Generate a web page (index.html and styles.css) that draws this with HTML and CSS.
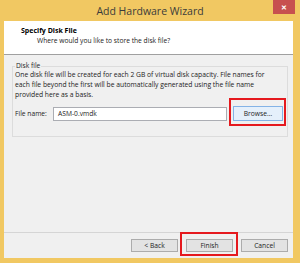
FILE: index.html
```html
<!DOCTYPE html>
<html>
<head>
<meta charset="utf-8">
<link rel="stylesheet" href="styles.css">
</head>
<body>
<div class="window">
  <div class="titlebar">
    <span class="title">Add Hardware Wizard</span>
    <span class="close">&#x2715;</span>
  </div>
  <div class="client">
    <div class="header">
      <div class="h-title">Specify Disk File</div>
      <div class="h-sub">Where would you like to store the disk file?</div>
    </div>
    <fieldset class="group">
      <legend>Disk file</legend>
      <p class="desc">One disk file will be created for each 2 GB of virtual disk capacity. File names for<br>each file beyond the first will be automatically generated using the file name<br>provided here as a basis.</p>
      <div class="file-row">
        <label class="file-label">File name:</label>
        <div class="file-input">ASM-0.vmdk</div>
        <button class="btn btn-focus mark-browse">Browse...</button>
      </div>
    </fieldset>
    <div class="spacer"></div>
    <div class="footer">
      <button class="btn">&lt; Back</button>
      <button class="btn mark-finish">Finish</button>
      <button class="btn">Cancel</button>
    </div>
  </div>
</div>
</body>
</html>
```
FILE: styles.css
```css
html, body {
  margin: 0;
  padding: 0;
}
body {
  width: 300px;
  height: 263px;
  overflow: hidden;
  font-family: "Open Sans", "Noto Sans", sans-serif;
  color: #1a1a1a;
}
.window {
  width: 300px;
  height: 263px;
  box-sizing: border-box;
  background: #f1c862;
  padding: 0 7px 5px 4px;
  display: flex;
  flex-direction: column;
}
.titlebar {
  height: 21px;
  position: relative;
  display: flex;
  align-items: center;
  justify-content: center;
  margin-left: -4px;
  margin-right: -7px;
}
.title {
  font-size: 10.5px;
  color: #3b3b3b;
}
.close {
  position: absolute;
  top: 0;
  right: 5px;
  width: 22px;
  height: 14px;
  background: #c7504f;
  color: #ffffff;
  font-size: 7px;
  font-weight: bold;
  display: flex;
  align-items: center;
  justify-content: center;
}
.client {
  flex: 1;
  background: #f0f0f0;
  display: flex;
  flex-direction: column;
}
.header {
  background: #ffffff;
  height: 34px;
  box-sizing: border-box;
  border-bottom: 1px solid #a0a0a0;
  padding: 5px 0 0 17px;
}
.h-title {
  font-size: 7px;
  font-weight: bold;
  line-height: 10px;
  color: #000;
}
.h-sub {
  font-size: 6.7px;
  line-height: 10px;
  padding-left: 16px;
  color: #222;
}
.group {
  margin: 7px 5px 0 8px;
  padding: 0 3px 15px 2px;
  border: 1px solid #dcdcdc;
  min-width: 0;
}
.group legend {
  font-size: 6.7px;
  line-height: 8px;
  padding: 0 1px;
  color: #222;
}
.desc {
  margin: 0;
  font-size: 6.75px;
  line-height: 10px;
  color: #222;
  white-space: nowrap;
}
.file-row {
  display: flex;
  align-items: center;
  margin-top: 6px;
}
.file-label {
  font-size: 6.7px;
  color: #222;
  width: 38px;
}
.file-input {
  width: 174px;
  height: 14px;
  box-sizing: border-box;
  border: 1px solid #abadb3;
  background: #fff;
  font-size: 6.7px;
  line-height: 12px;
  padding-left: 4px;
  color: #222;
}
.btn {
  position: relative;
  width: 50px;
  height: 15px;
  box-sizing: border-box;
  border: 1px solid #acacac;
  background: #e3e3e3;
  font-family: "Open Sans", "Noto Sans", sans-serif;
  font-size: 6.7px;
  color: #222;
  padding: 0;
  margin: 0;
}
.btn-focus {
  border-color: #84b3e6;
  background: #e5f0fb;
  margin-left: 6px;
}
.mark-browse::after,
.mark-finish::after {
  content: "";
  position: absolute;
  border: 2px solid #e5191e;
}
.mark-browse::after {
  top: -9px;
  bottom: -6px;
  left: -5px;
  right: -4px;
}
.mark-finish::after {
  top: -8px;
  bottom: -5px;
  left: -7px;
  right: -6px;
}
.spacer {
  flex: 1;
}
.footer {
  border-top: 1px solid #d5d5d5;
  height: 26px;
  display: flex;
  justify-content: flex-end;
  align-items: flex-start;
  padding: 6px 5px 0 0;
  gap: 8px;
  box-sizing: border-box;
}
.footer .btn {
  width: 47px;
  height: 13px;
}
```
